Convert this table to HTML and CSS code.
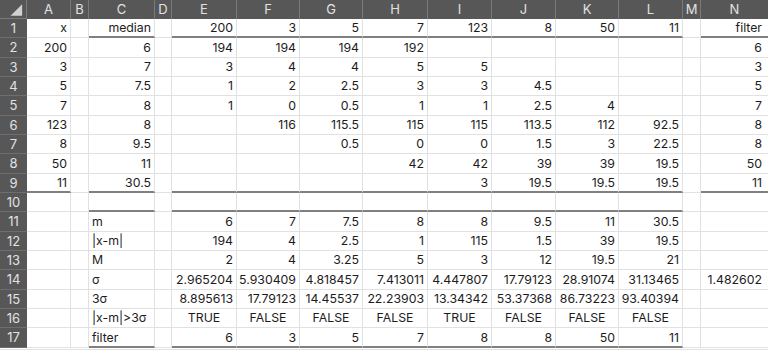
FILE: index.html
```html
<!DOCTYPE html>
<html>
<head>
<meta charset="utf-8">
<link rel="stylesheet" href="styles.css">
</head>
<body>
<div class="sheet">
  <div class="corner"><svg width="27" height="19" viewBox="0 0 27 19"><polygon points="23,4 23,16 11,16" fill="#d0d0d0"/></svg></div>
  <div class="ch">A</div><div class="ch">B</div><div class="ch">C</div><div class="ch">D</div><div class="ch">E</div><div class="ch">F</div><div class="ch">G</div><div class="ch">H</div><div class="ch">I</div><div class="ch">J</div><div class="ch">K</div><div class="ch">L</div><div class="ch">M</div><div class="ch last">N</div>

  <div class="rh">1</div>
  <div class="c">x</div><div class="c"></div><div class="c bb">median</div><div class="c"></div><div class="c bb">200</div><div class="c bb">3</div><div class="c bb">5</div><div class="c bb">7</div><div class="c bb">123</div><div class="c bb">8</div><div class="c bb">50</div><div class="c bb">11</div><div class="c"></div><div class="c n bb">filter</div>

  <div class="rh">2</div>
  <div class="c">200</div><div class="c"></div><div class="c">6</div><div class="c"></div><div class="c">194</div><div class="c">194</div><div class="c">194</div><div class="c">192</div><div class="c"></div><div class="c"></div><div class="c"></div><div class="c"></div><div class="c"></div><div class="c n">6</div>

  <div class="rh">3</div>
  <div class="c">3</div><div class="c"></div><div class="c">7</div><div class="c"></div><div class="c">3</div><div class="c">4</div><div class="c">4</div><div class="c">5</div><div class="c">5</div><div class="c"></div><div class="c"></div><div class="c"></div><div class="c"></div><div class="c n">3</div>

  <div class="rh">4</div>
  <div class="c">5</div><div class="c"></div><div class="c">7.5</div><div class="c"></div><div class="c">1</div><div class="c">2</div><div class="c">2.5</div><div class="c">3</div><div class="c">3</div><div class="c">4.5</div><div class="c"></div><div class="c"></div><div class="c"></div><div class="c n">5</div>

  <div class="rh">5</div>
  <div class="c">7</div><div class="c"></div><div class="c">8</div><div class="c"></div><div class="c">1</div><div class="c">0</div><div class="c">0.5</div><div class="c">1</div><div class="c">1</div><div class="c">2.5</div><div class="c">4</div><div class="c"></div><div class="c"></div><div class="c n">7</div>

  <div class="rh">6</div>
  <div class="c">123</div><div class="c"></div><div class="c">8</div><div class="c"></div><div class="c"></div><div class="c">116</div><div class="c">115.5</div><div class="c">115</div><div class="c">115</div><div class="c">113.5</div><div class="c">112</div><div class="c">92.5</div><div class="c"></div><div class="c n">8</div>

  <div class="rh">7</div>
  <div class="c">8</div><div class="c"></div><div class="c">9.5</div><div class="c"></div><div class="c"></div><div class="c"></div><div class="c">0.5</div><div class="c">0</div><div class="c">0</div><div class="c">1.5</div><div class="c">3</div><div class="c">22.5</div><div class="c"></div><div class="c n">8</div>

  <div class="rh">8</div>
  <div class="c">50</div><div class="c"></div><div class="c">11</div><div class="c"></div><div class="c"></div><div class="c"></div><div class="c"></div><div class="c">42</div><div class="c">42</div><div class="c">39</div><div class="c">39</div><div class="c">19.5</div><div class="c"></div><div class="c n">50</div>

  <div class="rh">9</div>
  <div class="c bb">11</div><div class="c"></div><div class="c bb">30.5</div><div class="c"></div><div class="c bb"></div><div class="c bb"></div><div class="c bb"></div><div class="c bb"></div><div class="c bb">3</div><div class="c bb">19.5</div><div class="c bb">19.5</div><div class="c bb">19.5</div><div class="c"></div><div class="c n bb">11</div>

  <div class="rh">10</div>
  <div class="c"></div><div class="c"></div><div class="c bb"></div><div class="c"></div><div class="c bb"></div><div class="c bb"></div><div class="c bb"></div><div class="c bb"></div><div class="c bb"></div><div class="c bb"></div><div class="c bb"></div><div class="c bb"></div><div class="c"></div><div class="c n"></div>

  <div class="rh">11</div>
  <div class="c"></div><div class="c"></div><div class="c l">m</div><div class="c"></div><div class="c">6</div><div class="c">7</div><div class="c">7.5</div><div class="c">8</div><div class="c">8</div><div class="c">9.5</div><div class="c">11</div><div class="c">30.5</div><div class="c"></div><div class="c n"></div>

  <div class="rh">12</div>
  <div class="c"></div><div class="c"></div><div class="c l">|x-m|</div><div class="c"></div><div class="c">194</div><div class="c">4</div><div class="c">2.5</div><div class="c">1</div><div class="c">115</div><div class="c">1.5</div><div class="c">39</div><div class="c">19.5</div><div class="c"></div><div class="c n"></div>

  <div class="rh">13</div>
  <div class="c"></div><div class="c"></div><div class="c l">M</div><div class="c"></div><div class="c">2</div><div class="c">4</div><div class="c">3.25</div><div class="c">5</div><div class="c">3</div><div class="c">12</div><div class="c">19.5</div><div class="c">21</div><div class="c"></div><div class="c n"></div>

  <div class="rh">14</div>
  <div class="c"></div><div class="c"></div><div class="c l">σ</div><div class="c"></div><div class="c">2.965204</div><div class="c">5.930409</div><div class="c">4.818457</div><div class="c">7.413011</div><div class="c">4.447807</div><div class="c">17.79123</div><div class="c">28.91074</div><div class="c">31.13465</div><div class="c"></div><div class="c n">1.482602</div>

  <div class="rh">15</div>
  <div class="c"></div><div class="c"></div><div class="c l">3σ</div><div class="c"></div><div class="c">8.895613</div><div class="c">17.79123</div><div class="c">14.45537</div><div class="c">22.23903</div><div class="c">13.34342</div><div class="c">53.37368</div><div class="c">86.73223</div><div class="c">93.40394</div><div class="c"></div><div class="c n"></div>

  <div class="rh">16</div>
  <div class="c"></div><div class="c"></div><div class="c l">|x-m|&gt;3σ</div><div class="c"></div><div class="c m">TRUE</div><div class="c m">FALSE</div><div class="c m">FALSE</div><div class="c m">FALSE</div><div class="c m">TRUE</div><div class="c m">FALSE</div><div class="c m">FALSE</div><div class="c m">FALSE</div><div class="c"></div><div class="c n"></div>

  <div class="rh">17</div>
  <div class="c"></div><div class="c"></div><div class="c l bb">filter</div><div class="c"></div><div class="c bb">6</div><div class="c bb">3</div><div class="c bb">5</div><div class="c bb">7</div><div class="c bb">8</div><div class="c bb">8</div><div class="c bb">50</div><div class="c bb">11</div><div class="c"></div><div class="c n"></div>
</div>
</body>
</html>
```
FILE: styles.css
```css
html, body {
  margin: 0;
  padding: 0;
  background: #ffffff;
  overflow: hidden;
}
.sheet {
  display: grid;
  grid-template-columns: 27px 44px 18px 66px 17px 65px 63px 63px 65px 64px 64px 63px 64px 18px 67px;
  grid-template-rows: 19px repeat(17, 19.33px);
  width: 768px;
  height: 350px;
  overflow: hidden;
  font-family: "Inter", "DejaVu Sans", sans-serif;
  font-size: 12.3px;
  color: #1c1c1c;
  border-bottom: 1px solid #e1e1e1;
  box-sizing: border-box;
}
.corner {
  background: #575757;
  border-right: 1px solid #7a7a7a;
  border-bottom: 1px solid #7a7a7a;
  box-sizing: border-box;
  display: flex;
}
.ch {
  background: #575757;
  color: #e2e2e2;
  text-align: center;
  line-height: 19px;
  border-right: 1px solid #7a7a7a;
  box-sizing: border-box;
  font-size: 13px;
}
.ch.last {
  border-right: none;
}
.rh {
  background: #575757;
  color: #e2e2e2;
  text-align: center;
  border-bottom: 1px solid #6e6e6e;
  box-sizing: border-box;
  display: flex;
  align-items: center;
  justify-content: center;
  font-size: 13px;
}
.c {
  box-sizing: border-box;
  border-right: 1px solid #e1e1e1;
  border-bottom: 1px solid #e1e1e1;
  display: flex;
  align-items: flex-end;
  justify-content: flex-end;
  padding: 0 3px 2px 3px;
  white-space: nowrap;
  overflow: hidden;
  line-height: 14px;
}
.c.n {
  border-right: none;
  padding-right: 6px;
}
.c.l {
  justify-content: flex-start;
}
.c.m {
  justify-content: center;
}
.c.bb {
  border-bottom: 2px solid #808080;
  padding-bottom: 1px;
}
```
